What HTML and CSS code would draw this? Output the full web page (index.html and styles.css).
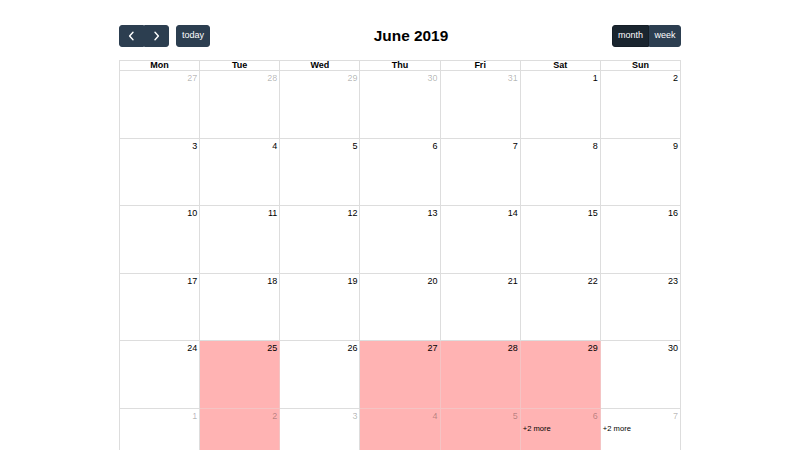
FILE: index.html
```html
<!DOCTYPE html>
<html>
<head>
<meta charset="utf-8">
<link rel="stylesheet" href="styles.css">
</head>
<body>
<div class="cal">
  <div class="toolbar">
    <div class="chunk">
      <div class="btn-group">
        <button class="btn btn-icon" aria-label="prev"><svg width="7" height="10" viewBox="0 0 7 10"><path d="M5 1.2 1.6 5 5 8.8" fill="none" stroke="#fff" stroke-width="1.4" stroke-linecap="round" stroke-linejoin="round"/></svg></button>
        <button class="btn btn-icon" aria-label="next"><svg width="7" height="10" viewBox="0 0 7 10"><path d="M2 1.2 5.4 5 2 8.8" fill="none" stroke="#fff" stroke-width="1.4" stroke-linecap="round" stroke-linejoin="round"/></svg></button>
      </div>
      <button class="btn btn-today">today</button>
    </div>
    <h2 class="title">June 2019</h2>
    <div class="chunk">
      <div class="btn-group">
        <button class="btn btn-month active">month</button>
        <button class="btn btn-week">week</button>
      </div>
    </div>
  </div>
  <div class="grid">
    <div class="hd">Mon</div><div class="hd">Tue</div><div class="hd">Wed</div><div class="hd">Thu</div><div class="hd">Fri</div><div class="hd">Sat</div><div class="hd">Sun</div>

    <div class="day other"><span class="num">27</span></div>
    <div class="day other"><span class="num">28</span></div>
    <div class="day other"><span class="num">29</span></div>
    <div class="day other"><span class="num">30</span></div>
    <div class="day other"><span class="num">31</span></div>
    <div class="day"><span class="num">1</span></div>
    <div class="day"><span class="num">2</span></div>

    <div class="day"><span class="num">3</span></div>
    <div class="day"><span class="num">4</span></div>
    <div class="day"><span class="num">5</span></div>
    <div class="day"><span class="num">6</span></div>
    <div class="day"><span class="num">7</span></div>
    <div class="day"><span class="num">8</span></div>
    <div class="day"><span class="num">9</span></div>

    <div class="day"><span class="num">10</span></div>
    <div class="day"><span class="num">11</span></div>
    <div class="day"><span class="num">12</span></div>
    <div class="day"><span class="num">13</span></div>
    <div class="day"><span class="num">14</span></div>
    <div class="day"><span class="num">15</span></div>
    <div class="day"><span class="num">16</span></div>

    <div class="day"><span class="num">17</span></div>
    <div class="day"><span class="num">18</span></div>
    <div class="day"><span class="num">19</span></div>
    <div class="day"><span class="num">20</span></div>
    <div class="day"><span class="num">21</span></div>
    <div class="day"><span class="num">22</span></div>
    <div class="day"><span class="num">23</span></div>

    <div class="day"><span class="num">24</span></div>
    <div class="day bg"><span class="num">25</span></div>
    <div class="day"><span class="num">26</span></div>
    <div class="day bg"><span class="num">27</span></div>
    <div class="day bg"><span class="num">28</span></div>
    <div class="day bg"><span class="num">29</span></div>
    <div class="day"><span class="num">30</span></div>

    <div class="day other"><span class="num">1</span></div>
    <div class="day other bg"><span class="num">2</span></div>
    <div class="day other"><span class="num">3</span></div>
    <div class="day other bg"><span class="num">4</span></div>
    <div class="day other bg"><span class="num">5</span></div>
    <div class="day other bg"><span class="num">6</span><a class="more">+2 more</a></div>
    <div class="day other"><span class="num">7</span><a class="more">+2 more</a></div>
  </div>
</div>
</body>
</html>
```

FILE: styles.css
```css
html, body {
  margin: 0;
  padding: 0;
  background: #fff;
}

body {
  font-family: "Liberation Sans", Arial, sans-serif;
  font-size: 9px;
  color: #000;
}

.cal {
  width: 562px;
  margin: 25px auto 0;
}

.toolbar {
  display: flex;
  align-items: center;
  justify-content: space-between;
  margin-bottom: 13px;
}

.chunk {
  display: flex;
  align-items: center;
  gap: 7px;
}

.title {
  margin: 0;
  font-size: 15.4px;
  font-weight: bold;
  line-height: 22px;
}

.btn-group {
  display: flex;
}

.btn {
  font-family: "Liberation Sans", Arial, sans-serif;
  font-size: 9px;
  line-height: 13.5px;
  height: 22px;
  padding: 0;
  margin: 0;
  color: #fff;
  background: #2c3e50;
  border: 1px solid #2c3e50;
  border-radius: 3px;
  display: flex;
  align-items: center;
  justify-content: center;
}

.btn-group .btn {
  border-radius: 0;
}

.btn-group .btn:first-child {
  border-radius: 3px 0 0 3px;
}

.btn-group .btn:last-child {
  border-radius: 0 3px 3px 0;
}

.btn.active {
  background: #1a252f;
  border-color: #151e27;
}

.btn-icon {
  width: 25px;
}

.btn-today {
  width: 34px;
}

.btn-month {
  width: 37px;
}

.btn-week {
  width: 32px;
}

.grid {
  display: grid;
  grid-template-columns: repeat(7, 1fr);
  grid-template-rows: 10px repeat(6, 67.6px);
  border-top: 1px solid #ddd;
  border-left: 1px solid #ddd;
}

.hd {
  border-right: 1px solid #ddd;
  border-bottom: 1px solid #ddd;
  font-weight: bold;
  text-align: center;
  line-height: 9px;
  overflow: hidden;
}

.day {
  border-right: 1px solid #ddd;
  border-bottom: 1px solid #ddd;
  display: flex;
  flex-direction: column;
  align-items: stretch;
  min-width: 0;
}

.day.bg {
  background: #ffb3b3;
  border-right-color: #f4c4c4;
  border-bottom-color: #f4c4c4;
}

.num {
  align-self: flex-end;
  padding: 2px 2px 0 2px;
  line-height: 10.5px;
}

.other .num {
  color: rgba(0, 0, 0, 0.3);
}

.more {
  font-size: 7.6px;
  line-height: 9px;
  margin: 3px 0 0 2px;
  color: #000;
}
```
